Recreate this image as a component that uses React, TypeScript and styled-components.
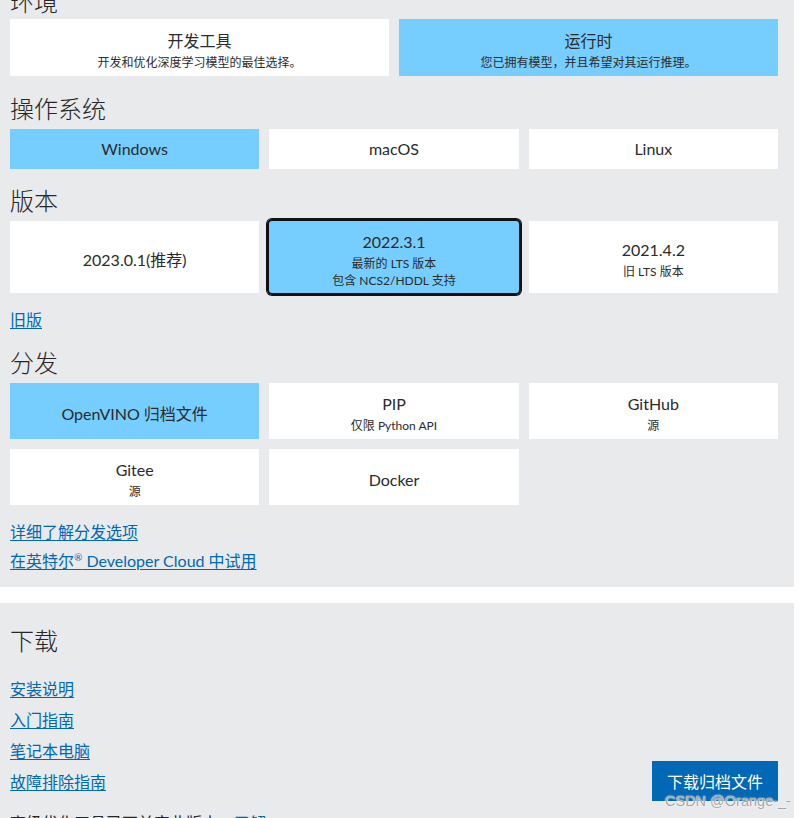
import React from "react";
import styled, { createGlobalStyle } from "styled-components";

const GlobalStyle = createGlobalStyle`
  html, body { margin: 0; padding: 0; background: #ffffff; }
  body {
    font-family: Lato, "Noto Sans CJK SC", "Noto Sans", sans-serif;
    color: #262626;
    -webkit-font-smoothing: antialiased;
  }
  * { box-sizing: border-box; }
`;

const Page = styled.div`
  width: 794px;
  overflow: hidden;
  height: 818px;
`;

const Section = styled.section<{ $top?: number; $bottom?: number }>`
  background: #e9eaec;
  padding: ${(p) => p.$top ?? 0}px 16px ${(p) => p.$bottom ?? 0}px 10px;
`;

const Spacer = styled.div`
  height: 16px;
  background: #ffffff;
`;

const Heading = styled.h2<{ $mt?: number; $mb?: number }>`
  margin: ${(p) => p.$mt ?? 16}px 0 ${(p) => p.$mb ?? 4}px;
  font-size: 24px;
  line-height: 32px;
  font-weight: 300;
  color: #262626;
`;

const Grid = styled.div<{ $cols: number }>`
  display: grid;
  grid-template-columns: repeat(${(p) => p.$cols}, 1fr);
  gap: 10px;
  width: 768px;
`;

const Card = styled.div<{ $h: number; $active?: boolean; $focus?: boolean; $single?: boolean }>`
  height: ${(p) => p.$h}px;
  background: ${(p) => (p.$active ? "#76cdff" : "#ffffff")};
  display: flex;
  flex-direction: column;
  align-items: center;
  justify-content: center;
  padding-top: ${(p) => (p.$single ? 0 : 6)}px;
  text-align: center;
  cursor: pointer;
  ${(p) =>
    p.$focus
      ? `box-shadow: 0 0 0 2px #76cdff, 0 0 0 3px #111; border-radius: 3px; outline: 2px solid #111; outline-offset: 0px;`
      : ""}
`;

const CardTitle = styled.div`
  font-size: 16px;
  line-height: 20px;
  color: #2b2b2b;
`;

const CardSub = styled.div<{ $mt?: number }>`
  font-size: 12px;
  line-height: 16px;
  margin-top: ${(p) => p.$mt ?? 0}px;
  color: #2b2b2b;
`;

const LinkItem = styled.a<{ $mt?: number }>`
  display: block;
  width: fit-content;
  margin-top: ${(p) => p.$mt ?? 5}px;
  font-size: 16px;
  line-height: 24px;
  color: #0068b5;
  text-decoration: underline;
  text-underline-offset: 2px;
  cursor: pointer;
`;

const Sup = styled.sup`
  font-size: 10px;
  line-height: 0;
  vertical-align: 6px;
`;

const DownloadRow = styled.div`
  display: flex;
  justify-content: space-between;
  align-items: flex-end;
  width: 768px;
  margin-top: 20px;
`;

const LinkColumn = styled.div`
  display: flex;
  flex-direction: column;
  gap: 7px;
  padding-bottom: 7px;
`;

const ButtonWrap = styled.div`
  position: relative;
`;

const DownloadButton = styled.button`
  width: 126px;
  height: 40px;
  border: none;
  background: #0068b5;
  color: #ffffff;
  font-family: Lato, "Noto Sans CJK SC", sans-serif;
  font-size: 16px;
  padding: 0;
  cursor: pointer;
`;

const Watermark = styled.span`
  position: absolute;
  left: 13px;
  top: 32px;
  white-space: nowrap;
  font-family: "Liberation Sans", Arial, sans-serif;
  font-size: 14.5px;
  color: rgba(160, 160, 160, 0.95);
  text-shadow: 0 0 1px #ffffff, 0 0 2px #ffffff;
  pointer-events: none;
`;

const Note = styled.p`
  margin: 10px 0 0;
  font-size: 16px;
  line-height: 24px;
  color: #262626;
`;

const NoteLink = styled.a`
  color: #0068b5;
  text-decoration: underline;
`;

const environments = [
  { title: "开发工具", sub: "开发和优化深度学习模型的最佳选择。" },
  { title: "运行时", sub: "您已拥有模型，并且希望对其运行推理。", active: true },
];

const systems = [
  { title: "Windows", active: true },
  { title: "macOS" },
  { title: "Linux" },
];

const versions: { title: string; subs: string[]; active?: boolean }[] = [
  { title: "2023.0.1(推荐)", subs: [] },
  { title: "2022.3.1", subs: ["最新的 LTS 版本", "包含 NCS2/HDDL 支持"], active: true },
  { title: "2021.4.2", subs: ["旧 LTS 版本"] },
];

const distributions: { title: string; sub?: string; active?: boolean }[] = [
  { title: "OpenVINO 归档文件", active: true },
  { title: "PIP", sub: "仅限 Python API" },
  { title: "GitHub", sub: "源" },
  { title: "Gitee", sub: "源" },
  { title: "Docker" },
];

const downloadLinks = ["安装说明", "入门指南", "笔记本电脑", "故障排除指南"];

export default function App() {
  return (
    <Page>
      <GlobalStyle />
      <Section $top={0} $bottom={14}>
        <Heading $mt={-14} $mb={1}>环境</Heading>
        <Grid $cols={2}>
          {environments.map((e) => (
            <Card key={e.title} $h={57} $active={e.active}>
              <CardTitle>{e.title}</CardTitle>
              <CardSub $mt={4}>{e.sub}</CardSub>
            </Card>
          ))}
        </Grid>

        <Heading $mt={17} $mb={4}>操作系统</Heading>
        <Grid $cols={3}>
          {systems.map((s) => (
            <Card key={s.title} $h={40} $active={s.active} $single>
              <CardTitle>{s.title}</CardTitle>
            </Card>
          ))}
        </Grid>

        <Heading $mt={16} $mb={4}>版本</Heading>
        <Grid $cols={3}>
          {versions.map((v) => (
            <Card key={v.title} $h={72} $active={v.active} $focus={v.active}>
              <CardTitle>{v.title}</CardTitle>
              {v.subs.map((s, i) => (
                <CardSub key={s} $mt={i === 0 ? 4 : 1}>
                  {s}
                </CardSub>
              ))}
            </Card>
          ))}
        </Grid>

        <LinkItem $mt={15}>旧版</LinkItem>

        <Heading $mt={15} $mb={4}>分发</Heading>
        <Grid $cols={3}>
          {distributions.map((d) => (
            <Card key={d.title} $h={56} $active={d.active}>
              <CardTitle>{d.title}</CardTitle>
              {d.sub && <CardSub $mt={4}>{d.sub}</CardSub>}
            </Card>
          ))}
        </Grid>

        <LinkItem $mt={15}>详细了解分发选项</LinkItem>
        <LinkItem $mt={5}>
          在英特尔<Sup>®</Sup> Developer Cloud 中试用
        </LinkItem>
      </Section>

      <Spacer />

      <Section $top={22} $bottom={20}>
        <Heading $mt={0} $mb={0}>下载</Heading>
        <DownloadRow>
          <LinkColumn>
            {downloadLinks.map((l) => (
              <LinkItem key={l} $mt={0}>
                {l}
              </LinkItem>
            ))}
          </LinkColumn>
          <ButtonWrap>
            <DownloadButton>下载归档文件</DownloadButton>
            <Watermark>CSDN @Orange-_-</Watermark>
          </ButtonWrap>
        </DownloadRow>
        <Note>
          高级优化工具已不兼容此版本。<NoteLink>了解 NNCF</NoteLink>
        </Note>
      </Section>
    </Page>
  );
}
